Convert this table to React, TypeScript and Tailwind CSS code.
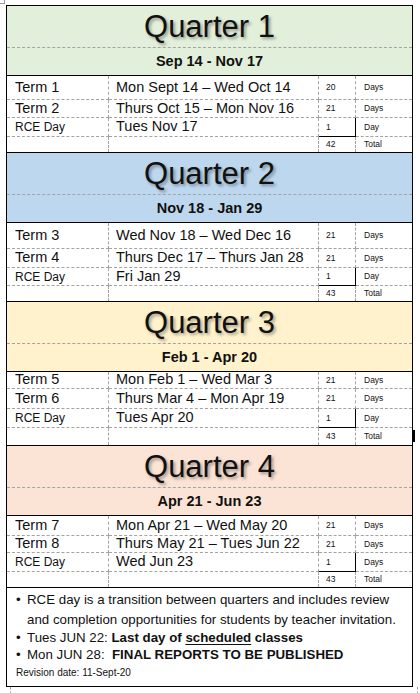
type Row = {
  label: string;
  small?: boolean;
  dates: string;
  n: string;
  unit: string;
  h: string;
};

type Quarter = {
  name: string;
  range: string;
  bg: string;
  rows: Row[];
};

const quarters: Quarter[] = [
  {
    name: "Quarter 1",
    range: "Sep 14 - Nov 17",
    bg: "bg-[#e2efda]",
    rows: [
      { label: "Term 1", dates: "Mon Sept 14 – Wed Oct 14", n: "20", unit: "Days", h: "h-[24px]" },
      { label: "Term 2", dates: "Thurs Oct 15 – Mon Nov 16", n: "21", unit: "Days", h: "h-[18px]" },
      { label: "RCE Day", small: true, dates: "Tues Nov 17", n: "1", unit: "Day", h: "h-[19px]" },
      { label: "", dates: "", n: "42", unit: "Total", h: "h-[15px]" },
    ],
  },
  {
    name: "Quarter 2",
    range: "Nov 18 - Jan 29",
    bg: "bg-[#bdd7ee]",
    rows: [
      { label: "Term 3", dates: "Wed Nov 18 – Wed Dec 16", n: "21", unit: "Days", h: "h-[26px]" },
      { label: "Term 4", dates: "Thurs Dec 17 – Thurs Jan 28", n: "21", unit: "Days", h: "h-[19px]" },
      { label: "RCE Day", small: true, dates: "Fri Jan 29", n: "1", unit: "Day", h: "h-[18px]" },
      { label: "", dates: "", n: "43", unit: "Total", h: "h-[15px]" },
    ],
  },
  {
    name: "Quarter 3",
    range: "Feb 1 - Apr 20",
    bg: "bg-[#fff2cc]",
    rows: [
      { label: "Term 5", dates: "Mon Feb 1 – Wed Mar 3", n: "21", unit: "Days", h: "h-[17px]" },
      { label: "Term 6", dates: "Thurs Mar 4 – Mon Apr 19", n: "21", unit: "Days", h: "h-[20px]" },
      { label: "RCE Day", small: true, dates: "Tues Apr 20", n: "1", unit: "Day", h: "h-[19px]" },
      { label: "", dates: "", n: "43", unit: "Total", h: "h-[17px]" },
    ],
  },
  {
    name: "Quarter 4",
    range: "Apr 21 - Jun 23",
    bg: "bg-[#fbe4d5]",
    rows: [
      { label: "Term 7", dates: "Mon Apr 21 – Wed May 20", n: "21", unit: "Days", h: "h-[20px]" },
      { label: "Term 8", dates: "Thurs May 21 – Tues Jun 22", n: "21", unit: "Days", h: "h-[17px]" },
      { label: "RCE Day", small: true, dates: "Wed Jun 23", n: "1", unit: "Days", h: "h-[19px]" },
      { label: "", dates: "", n: "43", unit: "Total", h: "h-[15px]" },
    ],
  },
];

const dash = "border-dashed border-[#a3a3a3]";

function TermRow({ r, i }: { r: Row; i: number }) {
  const last = i === 3;
  // bottom line under each cell, the count cell above the total gets a solid rule
  const bb = last ? "" : `border-b ${dash}`;
  const numBb = i === 2 ? "border-b border-solid border-black" : bb;
  return (
    <div className={`flex ${r.h}`}>
      <div
        className={`w-[102px] flex items-center pl-[8px] border-r ${dash} ${bb} ${
          r.small ? "text-[12px]" : "text-[14.5px]"
        }`}
      >
        {r.label}
      </div>
      <div className={`w-[210px] flex items-center pl-[7px] text-[14.5px] border-r ${dash} ${bb}`}>
        {r.dates}
      </div>
      <div className={`w-[37px] flex items-center pl-[7px] text-[8.5px] border-r ${dash} ${numBb}`}>
        {r.n}
      </div>
      <div className={`flex-1 flex items-center pl-[8px] text-[8.5px] ${bb}`}>{r.unit}</div>
    </div>
  );
}

function QuarterBlock({ q }: { q: Quarter }) {
  return (
    <section className="border-t border-black">
      <div className={q.bg}>
        <div className={`h-[42px] flex items-center justify-center border-b ${dash}`}>
          <h2 className="text-[31px] leading-none text-[#111] [text-shadow:2px_2px_3px_rgba(0,0,0,0.35)]">
            {q.name}
          </h2>
        </div>
        <div className="h-[28px] flex items-center justify-center border-b border-black">
          <h3 className="text-[14.5px] font-bold text-[#111]">{q.range}</h3>
        </div>
      </div>
      {q.rows.map((r, i) => (
        <TermRow key={i} r={r} i={i} />
      ))}
    </section>
  );
}

export default function App() {
  return (
    <main className="relative w-[420px] h-[693px] bg-white overflow-hidden font-['Liberation_Sans',Arial,sans-serif] text-[#111]">
      <div className="absolute left-0 top-0 w-[5px] h-[4px] border-r border-b border-[#9c9c9c]" />
      <div className="pl-[6px] pt-[5px]">
        <div className="relative w-[407px] border-l border-r border-black">
          {quarters.map((q) => (
            <QuarterBlock key={q.name} q={q} />
          ))}

          <div className="absolute right-[-3px] top-[425px] w-[2px] h-[12px] bg-black" />

          <div className="h-[100px] border-t border-b border-black pl-[9px] pt-[2px] text-[13.3px]">
            <div className="flex leading-[20px]">
              <span className="w-[11px] shrink-0">•</span>
              <p>
                RCE day is a transition between quarters and includes review
                <br />
                and completion opportunities for students by teacher invitation.
              </p>
            </div>
            <div className="flex leading-[16px]">
              <span className="w-[11px] shrink-0">•</span>
              <p>
                Tues JUN 22: <b>Last day of <span className="underline underline-offset-2">scheduled</span> classes</b>
              </p>
            </div>
            <div className="flex leading-[18px]">
              <span className="w-[11px] shrink-0">•</span>
              <p>
                Mon JUN 28:&nbsp; <b>FINAL REPORTS TO BE PUBLISHED</b>
              </p>
            </div>
            <p className="text-[10px] leading-[16px] mt-[1px]">Revision date: 11-Sept-20</p>
          </div>
        </div>
        <div className="flex justify-between w-[412px] pl-[4px]">
          <div className={`h-[7px] border-l ${dash}`} />
          <div className={`h-[7px] border-l ${dash}`} />
        </div>
      </div>
    </main>
  );
}
